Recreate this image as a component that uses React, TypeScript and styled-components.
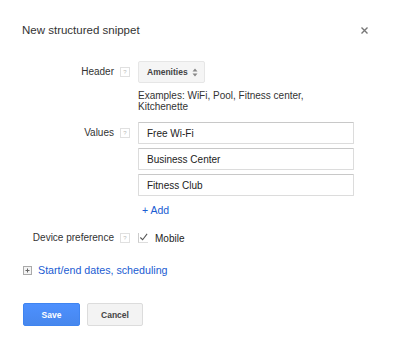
import styled, { createGlobalStyle } from 'styled-components'

const GlobalStyle = createGlobalStyle`
  body {
    margin: 0;
    background: #fff;
    font-family: 'Liberation Sans', Arial, sans-serif;
    color: #333;
  }
`
const Dialog = styled.div`
  width: 393px;
  height: 348px;
  padding: 23px 17px 0 22px;
  box-sizing: border-box;
`
const TitleBar = styled.div`
  display: flex;
  justify-content: space-between;
  align-items: center;
  height: 14px;
  padding-right: 8px;
`
const Title = styled.div`
  font-size: 11.5px;
  color: #333;
`
const CloseButton = styled.div`
  width: 7px;
  height: 7px;
  display: flex;
  cursor: pointer;
`
const Form = styled.div`
  display: flex;
  flex-direction: column;
  margin-top: 24px;
  padding-right: 22px;
`
const Row = styled.div<{ $top?: number; $center?: boolean }>`
  display: flex;
  align-items: ${(p) => (p.$center ? 'center' : 'flex-start')};
  margin-top: ${(p) => p.$top || 0}px;
`
const Label = styled.div<{ $h?: number }>`
  width: 92px;
  flex: none;
  text-align: right;
  font-size: 10px;
  color: #333;
  line-height: ${(p) => p.$h || 14}px;
  white-space: nowrap;
`
const HelpSlot = styled.div<{ $h?: number }>`
  height: ${(p) => p.$h || 14}px;
  display: flex;
  align-items: center;
  margin-left: 6px;
  flex: none;
`
const Help = styled.span`
  width: 8px;
  height: 8px;
  border: 1px solid #e0e0e0;
  font-size: 6px;
  line-height: 8px;
  text-align: center;
  color: #bbb;
  display: block;
`
const Field = styled.div`
  margin-left: 8px;
  flex: 1;
  display: flex;
  flex-direction: column;
`
const Select = styled.div`
  align-self: flex-start;
  height: 22px;
  box-sizing: border-box;
  padding: 0 6px 0 8px;
  display: flex;
  align-items: center;
  gap: 4px;
  background: #f5f5f5;
  border: 1px solid #e6e6e6;
  border-radius: 2px;
  font-size: 8.5px;
  font-weight: bold;
  color: #444;
`
const Hint = styled.div`
  margin-top: 7px;
  font-size: 10px;
  line-height: 11px;
  color: #333;
`
const Inputs = styled.div`
  display: flex;
  flex-direction: column;
  gap: 4px;
`
const TextBox = styled.div`
  height: 22px;
  box-sizing: border-box;
  border: 1px solid #dcdcdc;
  border-top-color: #c8c8c8;
  border-radius: 1px;
  padding-left: 8px;
  display: flex;
  align-items: center;
  font-size: 10px;
  color: #222;
`
const AddLink = styled.a`
  margin-top: 7px;
  padding-left: 4px;
  font-size: 10.5px;
  line-height: 14px;
  color: #1a5cd2;
  cursor: pointer;
`
const Check = styled.div`
  display: flex;
  align-items: center;
  gap: 7px;
  font-size: 10px;
  color: #222;
`
const CheckBox = styled.span`
  width: 10px;
  height: 10px;
  display: flex;
  border-left: 1px solid #ccc;
  border-bottom: 1px solid #ddd;
  box-sizing: border-box;
`
const Expander = styled.div`
  display: flex;
  align-items: center;
  gap: 6px;
  margin-top: 18px;
  height: 14px;
  padding-left: 1px;
`
const PlusBox = styled.span`
  width: 9px;
  height: 9px;
  display: flex;
`
const ExpandLink = styled.a`
  font-size: 10.7px;
  color: #1a5cd2;
  cursor: pointer;
`
const Buttons = styled.div`
  display: flex;
  gap: 7px;
  margin-top: 26px;
  padding-left: 1px;
`
const Button = styled.button<{ $primary?: boolean }>`
  width: ${(p) => (p.$primary ? 57 : 56)}px;
  height: 23px;
  border-radius: 2px;
  font-family: 'Liberation Sans', Arial, sans-serif;
  font-size: 8.5px;
  font-weight: bold;
  padding: 0;
  cursor: pointer;
  color: ${(p) => (p.$primary ? '#fff' : '#444')};
  background: ${(p) => (p.$primary ? 'linear-gradient(#4d90fe, #4787ed)' : '#f3f3f3')};
  border: 1px solid ${(p) => (p.$primary ? '#3f84f0' : '#dcdcdc')};
`

function Arrows() {
  return (
    <svg width="6" height="9" viewBox="0 0 6 9">
      <path d="M3 0.5 L5.5 3.5 H0.5 Z M3 8.5 L5.5 5.5 H0.5 Z" fill="#888" />
    </svg>
  )
}

export default function App() {
  const values = ['Free Wi-Fi', 'Business Center', 'Fitness Club']
  return (
    <Dialog>
      <GlobalStyle />
      <TitleBar>
        <Title>New structured snippet</Title>
        <CloseButton>
          <svg width="7" height="7" viewBox="0 0 7 7">
            <path d="M0.5 0.5 L6.5 6.5 M6.5 0.5 L0.5 6.5" stroke="#777" strokeWidth="1.4" />
          </svg>
        </CloseButton>
      </TitleBar>
      <Form>
        <Row>
          <Label $h={22}>Header</Label>
          <HelpSlot $h={22}>
            <Help>?</Help>
          </HelpSlot>
          <Field>
            <Select>
              Amenities <Arrows />
            </Select>
            <Hint>
              Examples: WiFi, Pool, Fitness center,
              <br />
              Kitchenette
            </Hint>
          </Field>
        </Row>
        <Row $top={10}>
          <Label $h={22}>Values</Label>
          <HelpSlot $h={22}>
            <Help>?</Help>
          </HelpSlot>
          <Field>
            <Inputs>
              {values.map((v) => (
                <TextBox key={v}>{v}</TextBox>
              ))}
            </Inputs>
            <AddLink>+ Add</AddLink>
          </Field>
        </Row>
        <Row $top={14} $center>
          <Label>Device preference</Label>
          <HelpSlot>
            <Help>?</Help>
          </HelpSlot>
          <Field>
            <Check>
              <CheckBox>
                <svg width="10" height="9" viewBox="0 0 10 9">
                  <path d="M1.5 4.5 L4 7 L9 0.5" stroke="#555" strokeWidth="1.2" fill="none" />
                </svg>
              </CheckBox>
              Mobile
            </Check>
          </Field>
        </Row>
      </Form>
      <Expander>
        <PlusBox>
          <svg width="9" height="9" viewBox="0 0 9 9">
            <rect x="0.5" y="0.5" width="8" height="8" fill="#f4f4f4" stroke="#aaa" />
            <path d="M2.5 4.5 H6.5 M4.5 2.5 V6.5" stroke="#666" />
          </svg>
        </PlusBox>
        <ExpandLink>Start/end dates, scheduling</ExpandLink>
      </Expander>
      <Buttons>
        <Button $primary>Save</Button>
        <Button>Cancel</Button>
      </Buttons>
    </Dialog>
  )
}
